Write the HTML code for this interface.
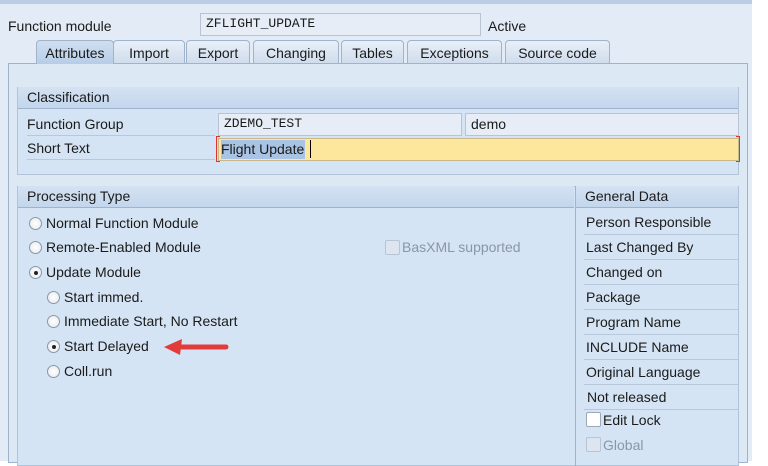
<!DOCTYPE html>
<html><head><style>
body{margin:0;width:768px;height:461px;overflow:hidden;background:#fff;font-family:"Liberation Sans",sans-serif;font-size:14px;color:#1a1a1a;position:relative}
.a{position:absolute;white-space:nowrap}
.top{left:0;top:0;width:752px;height:461px;background:#e2ebf6}
.band{left:0;top:0;width:752px;height:4px;background:#b9cde4}
.fld{background:#e6edf6;border:1px solid #b8c4d2;font-family:"Liberation Mono",monospace;font-size:13px;line-height:20px;padding-left:5px;box-sizing:border-box}
.tab{top:40px;height:24px;background:linear-gradient(#e8eff8,#cfdcec);border:1px solid #9fb4cc;border-bottom:none;border-radius:4px 4px 0 0;line-height:24px;text-align:center;box-sizing:border-box}
.panel{left:8px;top:63px;width:740px;height:400px;background:#dde8f5;border:1px solid #9fb4cc;box-sizing:border-box}
.hdr{background:linear-gradient(#d4e2f2,#c3d6ec);border-bottom:1px solid #9fb4cc;line-height:21px;padding-left:9px;box-sizing:border-box}
.grp{border:1px solid #b0c3d8;box-sizing:border-box;background:#d5e4f4}
.row{border-bottom:1px solid #b8c8da;line-height:22px}
.rad{width:13px;height:13px;border:1px solid #8a97a6;border-radius:50%;background:radial-gradient(#fff,#e4e8ec);box-sizing:border-box}
.rad.on::after{content:"";position:absolute;left:4px;top:4px;width:4px;height:4px;border-radius:50%;background:#222}
.chk{width:15px;height:15px;border:1px solid #9aa8b8;background:#fff;box-sizing:border-box;border-radius:2px}
</style></head><body>
<div class="a top"></div>
<div class="a band"></div>
<div class="a" style="left:8px;top:16px;line-height:20px">Function module</div>
<div class="a fld" style="left:200px;top:13px;width:281px;height:23px">ZFLIGHT_UPDATE</div>
<div class="a" style="left:488px;top:16px;line-height:20px">Active</div>
<div class="a tab" style="left:36px;width:78px;background:linear-gradient(#cfdff1,#b7cde6);z-index:2">Attributes</div>
<div class="a tab" style="left:113px;width:72px">Import</div>
<div class="a tab" style="left:186px;width:64px">Export</div>
<div class="a tab" style="left:253px;width:86px">Changing</div>
<div class="a tab" style="left:341px;width:63px">Tables</div>
<div class="a tab" style="left:407px;width:95px">Exceptions</div>
<div class="a tab" style="left:505px;width:105px">Source code</div>
<div class="a panel"></div>
<div class="a grp" style="left:17px;top:87px;width:722px;height:88px"></div>
<div class="a hdr" style="left:18px;top:87px;width:720px;height:22px">Classification</div>
<div class="a row" style="left:27px;top:113px;width:188px">Function Group</div>
<div class="a row" style="left:27px;top:137px;width:188px">Short Text</div>
<div class="a fld" style="left:218px;top:113px;width:244px;height:23px">ZDEMO_TEST</div>
<div class="a fld" style="left:465px;top:113px;width:274px;height:23px;font-family:'Liberation Sans',sans-serif;font-size:14px">demo</div>
<div class="a" style="left:218px;top:138px;width:521px;height:23px;background:#fde79c;border:1px solid #c9b98a;box-sizing:border-box"></div>
<div class="a" style="left:216px;top:136px;width:4px;height:26px;border:1px solid #d33;border-right:none;box-sizing:border-box"></div>
<div class="a" style="left:736px;top:136px;width:4px;height:26px;border:1px solid #d33;border-left:none;box-sizing:border-box"></div>
<div class="a" style="left:221px;top:140px;line-height:19px;background:#a9c3e4;padding-right:1px">Flight Update</div>
<div class="a" style="left:310px;top:140px;width:1px;height:18px;background:#000"></div>
<div class="a grp" style="left:17px;top:186px;width:722px;height:280px"></div>
<div class="a hdr" style="left:18px;top:186px;width:556px;height:22px">Processing Type</div>
<div class="a hdr" style="left:576px;top:186px;width:162px;height:22px">General Data</div>
<div class="a" style="left:575px;top:186px;width:1px;height:280px;background:#9fb4cc"></div>
<div class="a rad" style="left:29px;top:217px"></div><div class="a" style="left:46px;top:213px;line-height:20px">Normal Function Module</div>
<div class="a rad" style="left:29px;top:241px"></div><div class="a" style="left:46px;top:237px;line-height:20px">Remote-Enabled Module</div>
<div class="a rad on" style="left:29px;top:266px"></div><div class="a" style="left:46px;top:262px;line-height:20px">Update Module</div>
<div class="a rad" style="left:47px;top:291px"></div><div class="a" style="left:64px;top:287px;line-height:20px">Start immed.</div>
<div class="a rad" style="left:47px;top:315px"></div><div class="a" style="left:64px;top:311px;line-height:20px">Immediate Start, No Restart</div>
<div class="a rad on" style="left:47px;top:340px"></div><div class="a" style="left:64px;top:336px;line-height:20px">Start Delayed</div>
<div class="a rad" style="left:47px;top:365px"></div><div class="a" style="left:64px;top:361px;line-height:20px">Coll.run</div>
<svg class="a" style="left:160px;top:336px" width="72" height="22"><path d="M66 11 L18 11" stroke="#e23b3b" stroke-width="5" stroke-linecap="round"/><path d="M4 11 L22 3 L20 19 Z" fill="#e23b3b"/></svg>
<div class="a chk" style="left:385px;top:240px;background:#dde6f0;border-color:#b8c4d2"></div>
<div class="a" style="left:402px;top:237px;line-height:20px;color:#8a96a4">BasXML supported</div>
<div class="a" style="left:584px;top:210px;width:154px">
<div class="row" style="height:24px;line-height:24px;padding-left:2px">Person Responsible</div>
<div class="row" style="height:24px;line-height:24px;padding-left:2px">Last Changed By</div>
<div class="row" style="height:24px;line-height:24px;padding-left:2px">Changed on</div>
<div class="row" style="height:24px;line-height:24px;padding-left:2px">Package</div>
<div class="row" style="height:24px;line-height:24px;padding-left:2px">Program Name</div>
<div class="row" style="height:24px;line-height:24px;padding-left:2px">INCLUDE Name</div>
<div class="row" style="height:24px;line-height:24px;padding-left:2px">Original Language</div>
<div class="row" style="height:24px;line-height:24px;padding-left:3px">Not released</div>
</div>
<div class="a chk" style="left:586px;top:412px"></div><div class="a" style="left:603px;top:410px;line-height:20px">Edit Lock</div>
<div class="a chk" style="left:586px;top:437px;background:#dde6f0;border-color:#b8c4d2"></div><div class="a" style="left:603px;top:435px;line-height:20px;color:#8a96a4">Global</div>
</body></html>
